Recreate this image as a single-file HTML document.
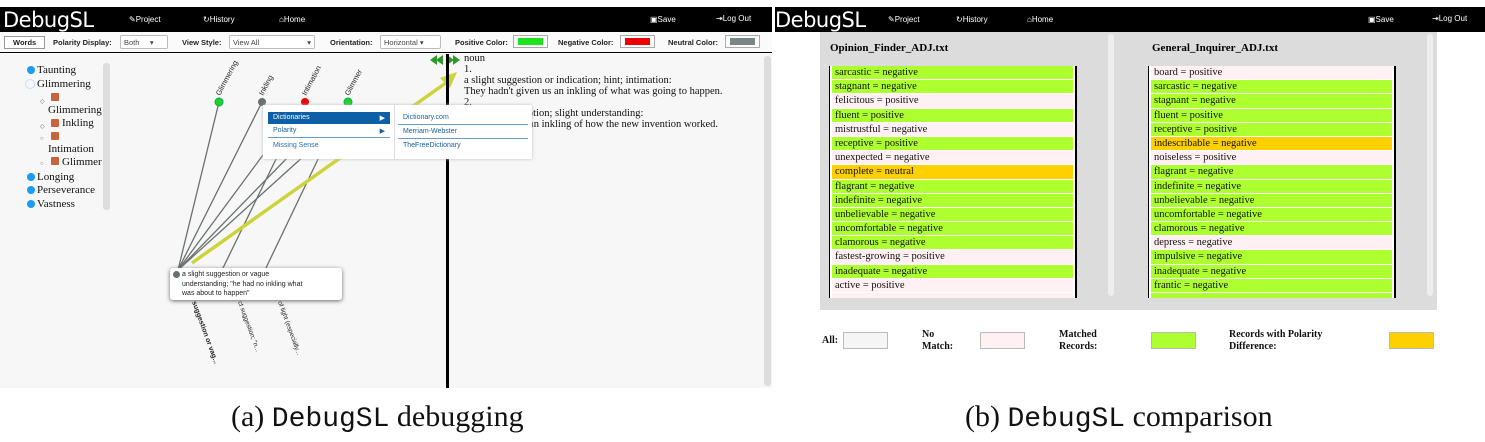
<!DOCTYPE html>
<html><head><meta charset="utf-8"><style>
*{margin:0;padding:0;box-sizing:border-box}
body{width:1485px;height:442px;background:#fff;position:relative;overflow:hidden;font-family:"Liberation Sans",sans-serif}
.a{position:absolute}
.hdr{background:#000;color:#fff;height:25px}
.logo{font-size:21px;top:1px;font-family:"DejaVu Sans","Liberation Sans",sans-serif;letter-spacing:-0.5px}
.nav{font-size:8px;top:9px}
.tb{font-size:7.5px;font-weight:bold;color:#222}
.sel{border:1px solid #bbb;background:#fff;font-size:7.5px;color:#444;height:14px;padding:2px 3px;border-radius:2px}
.sw{border:1px solid #aaa;height:13px;width:35px;background:#fff;padding:2px 4px}
.serif{font-family:"Liberation Serif",serif}
.tree{font-family:"Liberation Serif",serif;font-size:11px;color:#111;left:37px}
.dot{width:8px;height:8px;border-radius:50%;background:#1a9cf0;position:absolute}
.cb{width:8px;height:8px;background:#c8643c;border-radius:1px;position:absolute}
.row{height:14.2px;font-family:"Liberation Serif",serif;font-size:10.5px;line-height:14px;padding-left:3px;color:#111;border-bottom:1px solid #fff}
.g{background:#adff2f}.p{background:#fff0f4}.y{background:#ffd000}
.leg{font-family:"Liberation Serif",serif;font-weight:bold;font-size:10px;line-height:12px;color:#111}
.lb{height:17px;width:45px;border:1px solid #bbb}
.cap{font-family:"Liberation Serif",serif;font-size:30px;color:#111;top:400px;white-space:nowrap}
.cap span{font-family:"Liberation Mono",monospace;font-size:28px}
</style></head><body>

<!-- LEFT PANEL -->
<div class="a hdr" style="left:0;top:7px;width:772px"></div>
<div class="a logo" style="left:3px;top:8px;color:#fff">DebugSL</div>
<div class="a nav" style="left:129px;top:15px;color:#fff">✎Project</div>
<div class="a nav" style="left:203px;top:15px;color:#fff">↻History</div>
<div class="a nav" style="left:279px;top:15px;color:#fff">⌂Home</div>
<div class="a nav" style="left:650px;top:15px;color:#fff">▣Save</div>
<div class="a nav" style="left:716px;top:14px;color:#fff">⇥Log Out</div>
<div class="a" style="left:0;top:32px;width:772px;height:21px;background:#fafafa;border-bottom:1px solid #000"></div>
<div class="a tb" style="left:4px;top:36px;border:1px solid #999;padding:1px 8px;background:#fff">Words</div>
<div class="a tb" style="left:53px;top:38px">Polarity Display:</div>
<div class="a sel" style="left:120px;top:35px;width:48px">Both &nbsp;&nbsp;&nbsp;&nbsp;▾</div>
<div class="a tb" style="left:182px;top:38px">View Style:</div>
<div class="a sel" style="left:229px;top:35px;width:86px">View All<span style="float:right">▾</span></div>
<div class="a tb" style="left:330px;top:38px">Orientation:</div>
<div class="a sel" style="left:380px;top:35px;width:61px">Horizontal ▾</div>
<div class="a tb" style="left:455px;top:38px">Positive Color:</div>
<div class="a sw" style="left:513px;top:35px"><div style="background:#1ee31e;height:7px"></div></div>
<div class="a tb" style="left:558px;top:38px">Negative Color:</div>
<div class="a sw" style="left:620px;top:35px"><div style="background:#e00;height:7px"></div></div>
<div class="a tb" style="left:668px;top:38px">Neutral Color:</div>
<div class="a sw" style="left:725px;top:35px"><div style="background:#7a8585;height:7px"></div></div>

<div class="a" style="left:0;top:54px;width:772px;height:334px;background:#f7f7f7"></div>
<div class="a" style="left:764px;top:56px;width:7px;height:330px;background:#ddd;border-radius:3px"></div>
<div class="a" style="left:103px;top:63px;width:7px;height:147px;background:#ddd;border-radius:3px"></div>

<div class="dot" style="left:27px;top:66px"></div><div class="a tree" style="top:64px">Taunting</div>
<div class="a" style="left:25px;top:79px;width:10px;height:10px;border:1px solid #cde;border-radius:50%"></div><div class="a tree" style="top:78px">Glimmering</div>
<div class="a" style="left:40px;top:98px;font-size:6px;color:#666">◇</div><div class="cb" style="left:51px;top:93px"></div>
<div class="a tree" style="top:104px;left:48px">Glimmering</div>
<div class="a" style="left:40px;top:123px;font-size:6px;color:#666">◇</div><div class="cb" style="left:51px;top:119px"></div><div class="a tree" style="top:117px;left:62px">Inkling</div>
<div class="a" style="left:40px;top:136px;font-size:6px;color:#666">○</div><div class="cb" style="left:51px;top:132px"></div>
<div class="a tree" style="top:143px;left:48px">Intimation</div>
<div class="a" style="left:40px;top:161px;font-size:6px;color:#666">○</div><div class="cb" style="left:51px;top:157px"></div><div class="a tree" style="top:156px;left:62px">Glimmer</div>
<div class="dot" style="left:27px;top:173px"></div><div class="a tree" style="top:171px">Longing</div>
<div class="dot" style="left:27px;top:186px"></div><div class="a tree" style="top:184px">Perseverance</div>
<div class="dot" style="left:27px;top:200px"></div><div class="a tree" style="top:198px">Vastness</div>

<svg class="a" style="left:0;top:0" width="772" height="390">
<g stroke="#6a7070" stroke-width="1.3">
<line x1="178" y1="270" x2="219" y2="102"/>
<line x1="178" y1="270" x2="262" y2="102"/>
<line x1="178" y1="270" x2="263" y2="155"/>
<line x1="178" y1="270" x2="290" y2="155"/>
<line x1="178" y1="270" x2="305" y2="155"/>
<line x1="222" y1="270" x2="278" y2="155"/>
<line x1="265" y1="270" x2="320" y2="155"/>
</g>
<line x1="192" y1="263" x2="450" y2="80" stroke="#cdd43a" stroke-width="3.5"/>
<polygon points="457,72 440,78 450,88" fill="#cdd43a"/>
<circle cx="219" cy="102" r="4" fill="#1ed41e" stroke="#0a6" /><circle cx="262" cy="102" r="4" fill="#6a7070"/>
<circle cx="305" cy="102" r="4" fill="#e00"/><circle cx="348" cy="102" r="4" fill="#1ed41e" stroke="#0a6"/>
<g font-size="7.5" fill="#222" font-family="Liberation Sans">
<text transform="translate(220,96) rotate(-62)">Glimmering</text>
<text transform="translate(263,96) rotate(-62)">Inkling</text>
<text transform="translate(306,96) rotate(-62)">Intimation</text>
<text transform="translate(349,96) rotate(-62)">Glimmer</text>
<text transform="translate(192,302) rotate(70)" font-weight="bold" font-size="7">suggestion or vag...</text>
<text transform="translate(238,302) rotate(70)" font-size="6.5">ct suggestion; "n...</text>
<text transform="translate(278,302) rotate(70)" font-size="6.5">of light (especially...</text>
</g>
<polygon points="430,60 437,55 437,65" fill="#2a9a2a"/><polygon points="436,60 443,55 443,65" fill="#2a9a2a"/>
<polygon points="460,60 453,55 453,65" fill="#2a9a2a"/><polygon points="454,60 447,55 447,65" fill="#2a9a2a"/>
</svg>
<div class="a" style="left:446px;top:54px;width:3px;height:334px;background:#000"></div>
<div class="a serif" style="left:464px;top:53px;font-size:10.5px;line-height:11px;color:#111">noun<br>1.<br>a slight suggestion or indication; hint; intimation:<br>They hadn't given us an inkling of what was going to happen.<br>2.<br>&nbsp;&nbsp;&nbsp;&nbsp;&nbsp;&nbsp;&nbsp;&nbsp;&nbsp;&nbsp;&nbsp;&nbsp;&nbsp;&nbsp;&nbsp;&nbsp;&nbsp;&nbsp;&nbsp;&nbsp;r notion; slight understanding:<br>&nbsp;&nbsp;&nbsp;&nbsp;&nbsp;&nbsp;&nbsp;&nbsp;&nbsp;&nbsp;&nbsp;&nbsp;&nbsp;&nbsp;&nbsp;&nbsp;&nbsp;&nbsp;&nbsp;&nbsp;ve an inkling of how the new invention worked.</div>

<div class="a" style="left:263px;top:105px;width:269px;height:54px;background:#fff;box-shadow:0 0 3px #bbb"></div>
<div class="a" style="left:268px;top:112px;width:122px;height:12px;background:#0e5fa5;color:#fff;font-size:7px;padding:2px 5px">Dictionaries<span style="float:right">▶</span></div>
<div class="a" style="left:268px;top:125px;width:122px;height:13px;border-bottom:1px solid #6a9cc5;color:#1a5f9a;font-size:7px;padding:2px 5px">Polarity<span style="float:right">▶</span></div>
<div class="a" style="left:268px;top:140px;color:#2a6fae;font-size:7px;padding:2px 5px">Missing Sense</div>
<div class="a" style="left:394px;top:105px;width:1px;height:54px;background:#ddd"></div>
<div class="a" style="left:398px;top:112px;width:130px;height:13px;border-bottom:1px solid #6a9cc5;color:#1a5f9a;font-size:7px;padding:2px 5px">Dictionary.com</div>
<div class="a" style="left:398px;top:126px;width:130px;height:13px;border-bottom:1px solid #6a9cc5;color:#1a5f9a;font-size:7px;padding:2px 5px">Merriam-Webster</div>
<div class="a" style="left:398px;top:140px;color:#1a5f9a;font-size:7px;padding:2px 5px">TheFreeDictionary</div>

<div class="a" style="left:170px;top:268px;width:172px;height:32px;background:#fff;border-radius:3px;box-shadow:0 1px 4px #666"></div>
<div class="a" style="left:173px;top:271px;width:7px;height:7px;border-radius:50%;background:#6a7070"></div>
<div class="a" style="left:182px;top:270px;font-size:7px;line-height:9.5px;color:#222">a slight suggestion or vague<br>understanding; "he had no inkling what<br>was about to happen"</div>

<div class="a cap" style="left:231px">(a) <span>DebugSL</span> debugging</div>

<!-- RIGHT PANEL -->
<div class="a hdr" style="left:775px;top:7px;width:710px"></div>
<div class="a logo" style="left:775px;top:8px;color:#fff">DebugSL</div>
<div class="a nav" style="left:888px;top:15px;color:#fff">✎Project</div>
<div class="a nav" style="left:956px;top:15px;color:#fff">↻History</div>
<div class="a nav" style="left:1027px;top:15px;color:#fff">⌂Home</div>
<div class="a nav" style="left:1368px;top:15px;color:#fff">▣Save</div>
<div class="a nav" style="left:1432px;top:14px;color:#fff">⇥Log Out</div>
<div class="a" style="left:820px;top:32px;width:617px;height:278px;background:#dcdcdc"></div>
<div class="a" style="left:1108px;top:34px;width:6px;height:262px;background:#eee;border-radius:3px"></div>
<div class="a" style="left:1427px;top:34px;width:6px;height:262px;background:#eee;border-radius:3px"></div>
<div class="a" style="left:830px;top:42px;font-family:'Liberation Serif',serif;font-weight:bold;font-size:11px">Opinion_Finder_ADJ.txt</div>
<div class="a" style="left:1152px;top:42px;font-family:'Liberation Serif',serif;font-weight:bold;font-size:11px">General_Inquirer_ADJ.txt</div>

<div class="a" style="left:829px;top:66px;width:248px;height:232px;background:#fff;border-left:1px solid #000;border-right:2px solid #000;overflow:hidden;padding:0 2px">
<div class="row g">sarcastic = negative</div><div class="row g">stagnant = negative</div><div class="row p">felicitous = positive</div><div class="row g">fluent = positive</div><div class="row p">mistrustful = negative</div><div class="row g">receptive = positive</div><div class="row p">unexpected = negative</div><div class="row y">complete = neutral</div><div class="row g">flagrant = negative</div><div class="row g">indefinite = negative</div><div class="row g">unbelievable = negative</div><div class="row g">uncomfortable = negative</div><div class="row g">clamorous = negative</div><div class="row p">fastest-growing = positive</div><div class="row g">inadequate = negative</div><div class="row p">active = positive</div><div class="row p">&nbsp;</div>
</div>
<div class="a" style="left:1148px;top:66px;width:248px;height:232px;background:#fff;border-left:1px solid #000;border-right:2px solid #000;overflow:hidden;padding:0 2px">
<div class="row p">board = positive</div><div class="row g">sarcastic = negative</div><div class="row g">stagnant = negative</div><div class="row g">fluent = positive</div><div class="row g">receptive = positive</div><div class="row y">indescribable = negative</div><div class="row p">noiseless = positive</div><div class="row g">flagrant = negative</div><div class="row g">indefinite = negative</div><div class="row g">unbelievable = negative</div><div class="row g">uncomfortable = negative</div><div class="row g">clamorous = negative</div><div class="row p">depress = negative</div><div class="row g">impulsive = negative</div><div class="row g">inadequate = negative</div><div class="row g">frantic = negative</div><div class="row g">&nbsp;</div>
</div>

<div class="a leg" style="left:822px;top:335px">All:</div><div class="a lb" style="left:843px;top:332px;background:#f5f5f5"></div>
<div class="a leg" style="left:922px;top:329px">No<br>Match:</div><div class="a lb" style="left:980px;top:332px;background:#fff0f4"></div>
<div class="a leg" style="left:1059px;top:329px">Matched<br>Records:</div><div class="a lb" style="left:1151px;top:332px;background:#adff2f"></div>
<div class="a leg" style="left:1229px;top:329px">Records with Polarity<br>Difference:</div><div class="a lb" style="left:1389px;top:332px;background:#ffd000"></div>

<div class="a cap" style="left:965px">(b) <span>DebugSL</span> comparison</div>
</body></html>
